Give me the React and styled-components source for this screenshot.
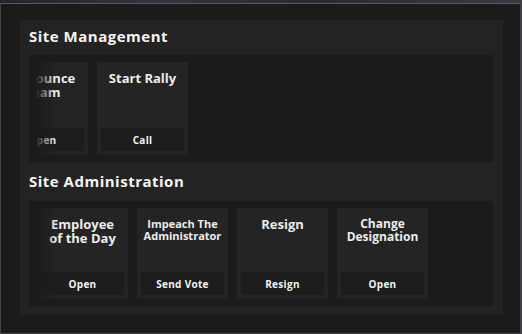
import React from "react";
import styled, { createGlobalStyle } from "styled-components";

const GlobalStyle = createGlobalStyle`
  html, body {
    margin: 0;
    padding: 0;
    background: #2b2b33;
    font-family: "Open Sans", "Liberation Sans", sans-serif;
  }
`;

const Screen = styled.div`
  width: 522px;
  height: 334px;
  padding-top: 3px;
  box-sizing: border-box;
  background: linear-gradient(90deg, #24242c, #34343e 30%, #2a2a32 60%, #3a3a44);
  overflow: hidden;
`;

const Frame = styled.div`
  width: 521px;
  height: 331px;
  box-sizing: border-box;
  background: #1b1b1b;
  border: 1px solid #444;
  border-top-color: #5a5a5a;
  padding: 16px 16px 0 19px;
`;

const Panel = styled.div`
  width: 483px;
  height: 295px;
  box-sizing: border-box;
  background: #232323;
  padding: 6px 10px 9px 9px;
  display: flex;
  flex-direction: column;
`;

const Heading = styled.h2`
  margin: 0;
  height: ${(p) => p.$h}px;
  box-sizing: border-box;
  padding-top: ${(p) => p.$top}px;
  color: #f4f4f4;
  font-size: 15px;
  line-height: 20px;
  font-weight: 700;
  letter-spacing: 0.5px;
`;

const Section = styled.div`
  position: relative;
  background: #1b1b1b;
  height: ${(p) => p.$h}px;
  box-sizing: border-box;
  padding: 7px 8px;
  overflow: hidden;
`;

const Track = styled.div`
  display: flex;
  gap: 9px;
  height: 100%;
  transform: translateX(${(p) => p.$offset}px);
`;

const Fade = styled.div`
  position: absolute;
  left: 0;
  top: 0;
  bottom: 0;
  width: 26px;
  background: linear-gradient(90deg, #1b1b1b 25%, rgba(27, 27, 27, 0));
  pointer-events: none;
`;

const Card = styled.div`
  flex: 0 0 91px;
  width: 91px;
  min-width: 0;
  height: 100%;
  background: #242424;
  box-sizing: border-box;
  padding: 9px 4px 4px;
  display: flex;
  flex-direction: column;
  align-items: stretch;
`;

const CardTitle = styled.div`
  flex: 1;
  color: #ececec;
  font-size: ${(p) => p.$size || 13}px;
  line-height: ${(p) => (p.$size ? p.$size + 1 : 14)}px;
  font-weight: 700;
  text-align: center;
  padding: ${(p) => p.$pad || 0}px ${(p) => p.$inset ?? 5}px 0;
`;

const Action = styled.button`
  height: 23px;
  border: none;
  background: #1d1d1d;
  color: #f2f2f2;
  font-family: inherit;
  font-size: 10px;
  font-weight: 700;
  letter-spacing: 0.3px;
  padding: 0;
`;

const management = [
  { title: "Announce Team", action: "Open" },
  { title: "Start Rally", action: "Call" },
];

const administration = [
  { title: "Employee of the Day", action: "Open" },
  { title: "Impeach The Administrator", action: "Send Vote", size: 11, pad: 1, inset: 0 },
  { title: "Resign", action: "Resign" },
  { title: "Change Designation", action: "Open", size: 12 },
];

const Row = ({ items, height, offset }) => (
  <Section $h={height}>
    <Track $offset={offset}>
      {items.map((it) => (
        <Card key={it.title}>
          <CardTitle $size={it.size} $pad={it.pad} $inset={it.inset}>
            {it.title}
          </CardTitle>
          <Action>{it.action}</Action>
        </Card>
      ))}
    </Track>
    <Fade />
  </Section>
);

export default function App() {
  return (
    <>
      <GlobalStyle />
      <Screen>
        <Frame>
          <Panel>
            <Heading $h={29} $top={0}>Site Management</Heading>
            <Row items={management} height={107} offset={-40} />
            <Heading $h={39} $top={9}>Site Administration</Heading>
            <Row items={administration} height={105} offset={0} />
          </Panel>
        </Frame>
      </Screen>
    </>
  );
}
